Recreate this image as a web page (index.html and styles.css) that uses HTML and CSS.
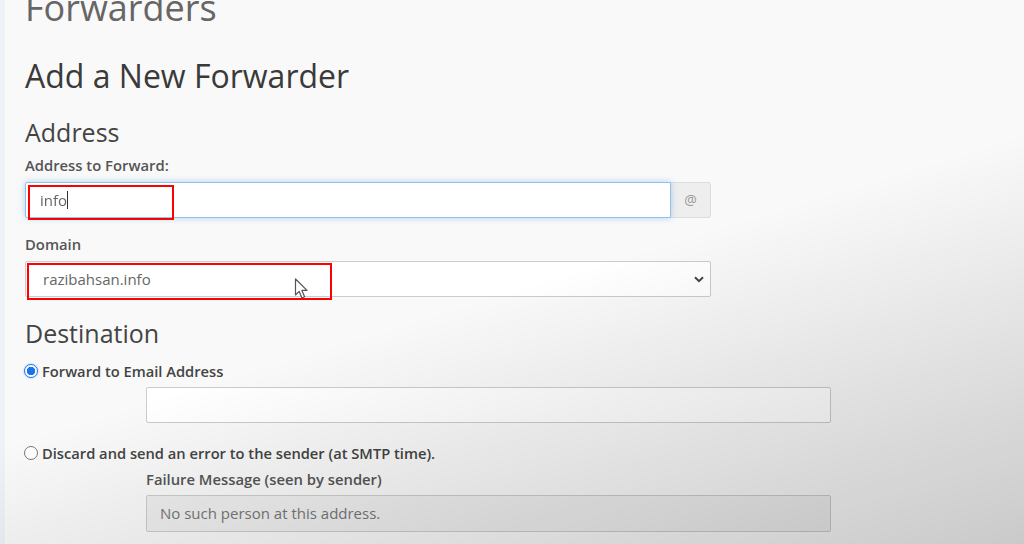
FILE: index.html
```html
<!DOCTYPE html>
<html>
<head>
    <title>Forwarders</title>
    <link rel="stylesheet" href="styles.css">
</head>
<body>
    <div class="page">
        <h1 class="page-title">Forwarders</h1>
        <h2 class="section-title">Add a New Forwarder</h2>

        <h3 class="group-title">Address</h3>
        <div class="form-group">
            <div class="field-label">Address to Forward:</div>
            <div class="input-group">
                <div class="form-control focused">info<span class="caret"></span></div>
                <span class="addon">@</span>
                <span class="mark mark-email"></span>
            </div>
        </div>

        <div class="form-group">
            <div class="field-label">Domain</div>
            <div class="select-wrap">
                <div class="form-control select">razibahsan.info
                    <svg class="chevron" width="10" height="7" viewBox="0 0 10 7"><path d="M1 1.2 L5 5.2 L9 1.2" fill="none" stroke="#444" stroke-width="2"/></svg>
                </div>
                <span class="mark mark-domain"></span>
                <svg class="pointer" width="16" height="22" viewBox="0 0 16 22">
                    <path d="M1.5 1 L1.5 17 L5.2 13.4 L8 20 L10.6 18.8 L7.9 12.4 L13 12.4 Z" fill="#fff" stroke="#555" stroke-width="1.2" stroke-linejoin="round"/>
                </svg>
            </div>
        </div>

        <h3 class="group-title dest">Destination</h3>
        <div class="option">
            <span class="radio checked"></span>
            <span class="option-label">Forward to Email Address</span>
        </div>
        <div class="sub-field">
            <div class="form-control plain"></div>
        </div>

        <div class="option discard">
            <span class="radio"></span>
            <span class="option-label">Discard and send an error to the sender (at SMTP time).</span>
        </div>
        <div class="sub-field">
            <div class="field-label">Failure Message (seen by sender)</div>
            <div class="form-control disabled">No such person at this address.</div>
        </div>
    </div>
</body>
</html>
```

FILE: styles.css
```css
html, body {
    margin: 0;
    height: 100%;
    overflow: hidden;
}
body {
    background-color: #f9f9f9;
    font-family: "Open Sans", "Noto Sans", sans-serif;
    color: #333;
    border-left: 5px solid #eef3fa;
    box-sizing: border-box;
}
body::after {
    content: "";
    position: fixed;
    left: 0;
    top: 0;
    right: 0;
    bottom: 0;
    pointer-events: none;
    background: linear-gradient(163deg, rgba(0,0,0,0) 52%, rgba(0,0,0,0.19) 100%);
}
.page {
    padding-left: 20px;
    width: 806px;
}
.page-title {
    margin: -14px 0 0 0;
    font-size: 36px;
    font-weight: 400;
    line-height: 43px;
    color: #666;
}
.section-title {
    margin: 28px 0 0 0;
    font-size: 32px;
    font-weight: 400;
    line-height: 38px;
    color: #3a3a3a;
}
.group-title {
    margin: 22px 0 0 0;
    font-size: 25px;
    font-weight: 400;
    line-height: 30px;
    color: #444;
}
.group-title.dest {
    margin-top: 21px;
}
.field-label {
    font-size: 14.8px;
    font-weight: 600;
    color: #555;
    line-height: 20px;
    margin-bottom: 7px;
}
.form-group {
    margin-top: 8px;
    margin-bottom: 16px;
}
.form-group + .form-group {
    margin-top: 0;
}
.input-group {
    position: relative;
    display: flex;
    width: 686px;
    height: 36px;
}
.form-control {
    box-sizing: border-box;
    height: 36px;
    border: 1px solid #ccc;
    border-radius: 2px;
    background: #fff;
    padding: 0 14px;
    font-size: 15px;
    line-height: 34px;
    color: #666;
}
.form-control.focused {
    flex: 1;
    border-color: #8fc1ea;
    box-shadow: 0 0 6px rgba(102,175,233,0.5);
    border-radius: 2px 0 0 2px;
    position: relative;
    z-index: 1;
}
.caret {
    display: inline-block;
    width: 1px;
    height: 18px;
    background: #333;
    vertical-align: middle;
    margin-top: -3px;
}
.addon {
    width: 40px;
    box-sizing: border-box;
    border: 1px solid #ddd;
    border-left: 0;
    border-radius: 0 3px 3px 0;
    background: #eee;
    color: #999;
    font-size: 14px;
    line-height: 34px;
    text-align: center;
}
.select-wrap {
    position: relative;
    width: 686px;
}
.form-control.select {
    position: relative;
    padding-left: 17px;
}
.chevron {
    position: absolute;
    right: 6px;
    top: 14px;
}
.mark {
    position: absolute;
    box-sizing: border-box;
    border: 2px solid #f00;
    z-index: 2;
}
.mark-email {
    left: 3px;
    top: 3px;
    width: 146px;
    height: 35px;
}
.mark-domain {
    left: 2px;
    top: 2px;
    width: 305px;
    height: 37px;
}
.pointer {
    position: absolute;
    left: 269px;
    top: 17px;
    z-index: 3;
}
.option {
    display: flex;
    align-items: center;
    margin-top: 13px;
    height: 20px;
}
.option.discard {
    margin-top: 20px;
}
.radio {
    box-sizing: border-box;
    width: 14px;
    height: 14px;
    border-radius: 50%;
    border: 1px solid #777;
    background: #fff;
    margin-left: -1px;
    margin-right: 4px;
}
.radio.checked {
    border: 1px solid #1a73e8;
    background: radial-gradient(circle, #1a73e8 0 4px, #fff 4.5px);
    box-shadow: 0 0 2px rgba(26,115,232,0.5);
}
.option-label {
    font-size: 14.7px;
    font-weight: 600;
    color: #444;
}
.sub-field {
    margin-left: 121px;
    width: 685px;
    margin-top: 6px;
}
.form-control.plain {
    height: 36px;
}
.sub-field .field-label {
    margin-bottom: 6px;
}
.form-control.disabled {
    background: #eee;
    height: 37px;
    line-height: 35px;
    padding-left: 13px;
    color: #777;
}
```
